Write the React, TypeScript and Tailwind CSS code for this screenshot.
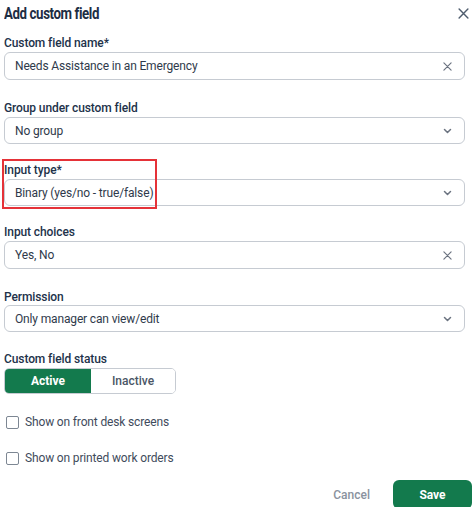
import React from "react";

const XIcon = ({ size = 10, cls = "" }: { size?: number; cls?: string }) => (
  <svg width={size} height={size} viewBox="0 0 10 10" className={cls} fill="none" stroke="currentColor" strokeWidth={1.3} strokeLinecap="round">
    <path d="M1 1 L9 9 M9 1 L1 9" />
  </svg>
);

const Chevron = () => (
  <svg width={9} height={6} viewBox="0 0 9 6" fill="none" stroke="currentColor" strokeWidth={1.5} strokeLinecap="round" strokeLinejoin="round" className="text-[#6b7380]">
    <path d="M1.5 1.5 L4.5 4.5 L7.5 1.5" />
  </svg>
);

const Label = ({ children, mt }: { children: React.ReactNode; mt: string }) => (
  <div className={`${mt} h-[14px] leading-[14px] text-[12px] tracking-[-0.1px] font-medium text-[#22324a]`}>{children}</div>
);

const Field = ({ value, icon, h, mt }: { value: string; icon: "x" | "chev"; h: string; mt: string }) => (
  <div className={`${mt} ${h} w-[461px] rounded-[6px] border border-[#c6cbd2] bg-white flex items-center justify-between pl-[10px] pr-[12px]`}>
    <span className="text-[12px] tracking-[-0.15px] text-[#2f3a4b]">{value}</span>
    {icon === "x" ? <XIcon size={9} cls="text-[#6b7380]" /> : <Chevron />}
  </div>
);

const Checkbox = ({ label, mt }: { label: string; mt: string }) => (
  <div className={`${mt} h-[16px] flex items-center`}>
    <div className="ml-[2px] w-[13px] h-[13px] rounded-[2px] border-[1.5px] border-[#7d8793] bg-white" />
    <span className="ml-[6px] text-[12px] tracking-[-0.15px] text-[#3f4b5c]">{label}</span>
  </div>
);

export default function App() {
  return (
    <div className="relative w-[474px] h-[507px] bg-white overflow-hidden" style={{ fontFamily: "Roboto, 'Liberation Sans', sans-serif" }}>
      <div className="pl-[4px] flex flex-col">
        <div className="h-[26px] flex items-center justify-between pr-[5px]">
          <span className="inline-block origin-left scale-x-[0.78] text-[17px] tracking-[-0.5px] font-bold text-[#1d2d44] leading-[20px] whitespace-nowrap">Add custom field</span>
          <XIcon size={11} cls="text-[#4f5d6e]" />
        </div>

        <Label mt="mt-[10px]">Custom field name*</Label>
        <Field mt="mt-[2px]" h="h-[28px]" value="Needs Assistance in an Emergency" icon="x" />

        <Label mt="mt-[21px]">Group under custom field</Label>
        <Field mt="mt-[2px]" h="h-[27px]" value="No group" icon="chev" />

        <Label mt="mt-[19px]">Input type*</Label>
        <Field mt="mt-[2px]" h="h-[27px]" value="Binary (yes/no - true/false)" icon="chev" />

        <Label mt="mt-[19px]">Input choices</Label>
        <Field mt="mt-[2px]" h="h-[28px]" value="Yes, No" icon="x" />

        <Label mt="mt-[21px]">Permission</Label>
        <Field mt="mt-[1px]" h="h-[27px]" value="Only manager can view/edit" icon="chev" />

        <Label mt="mt-[20px]">Custom field status</Label>
        <div className="mt-[2px] h-[26px] w-[172px] flex rounded-[5px] border border-[#c6cbd2] overflow-hidden">
          <div className="w-[86px] h-full bg-[#137a4d] flex items-center justify-center text-white text-[12px] font-bold">Active</div>
          <div className="flex-1 h-full bg-white flex items-center justify-center text-[#4b5666] text-[12px] font-medium">Inactive</div>
        </div>

        <Checkbox mt="mt-[20px]" label="Show on front desk screens" />
        <Checkbox mt="mt-[20px]" label="Show on printed work orders" />

        <div className="mt-[14px] flex items-center justify-end">
          <span className="mr-[23px] text-[12px] font-medium text-[#8a929e]">Cancel</span>
          <div className="w-[79px] h-[29px] rounded-[6px] bg-[#137a4d] flex items-center justify-center text-white text-[12px] font-bold mr-[2px]">Save</div>
        </div>
      </div>

      <div className="absolute left-[2px] top-[159px] w-[155px] h-[50px] border-2 border-[#e53238] pointer-events-none" />
    </div>
  );
}
